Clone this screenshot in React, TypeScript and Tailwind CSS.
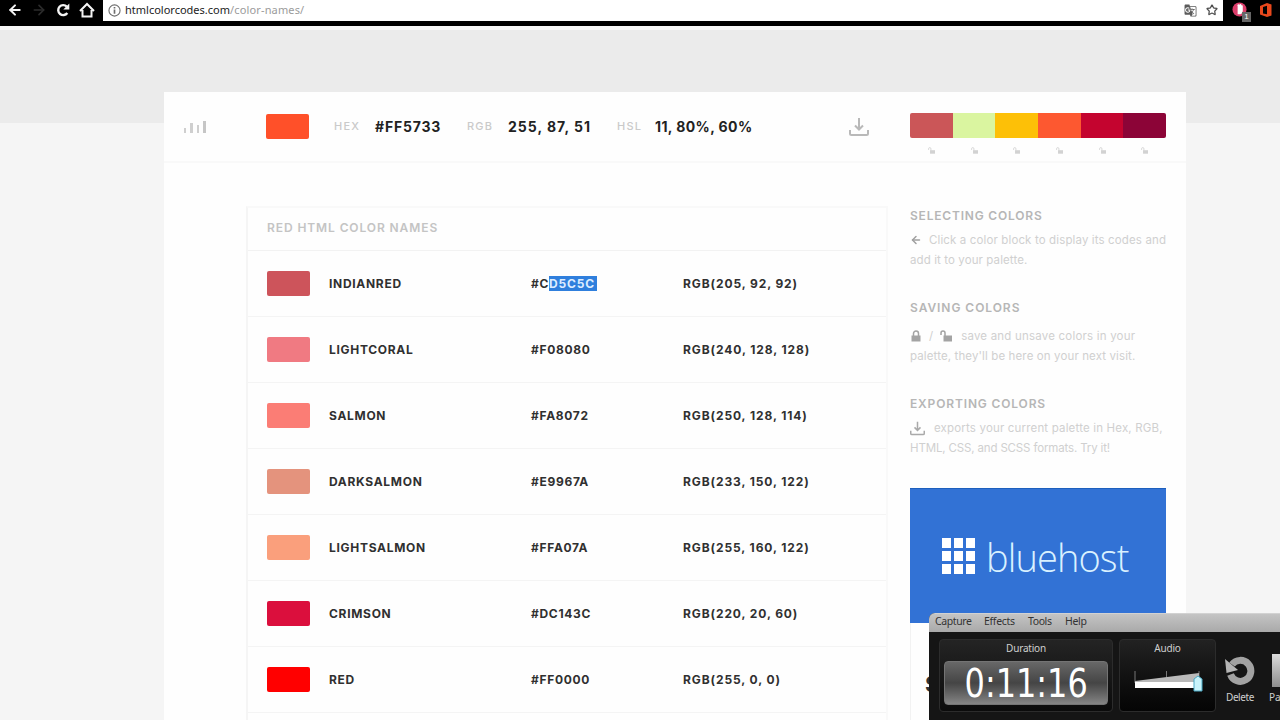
import { ArrowLeft, ArrowRight, Star } from 'lucide-react';
import { MdGTranslate } from 'react-icons/md';

const colors = [
  { name: 'INDIANRED', hex: '#CD5C5C', rgb: 'RGB(205, 92, 92)', swatch: 'bg-[#cd545b]', selected: true },
  { name: 'LIGHTCORAL', hex: '#F08080', rgb: 'RGB(240, 128, 128)', swatch: 'bg-[#f07a82]' },
  { name: 'SALMON', hex: '#FA8072', rgb: 'RGB(250, 128, 114)', swatch: 'bg-[#fb7d75]' },
  { name: 'DARKSALMON', hex: '#E9967A', rgb: 'RGB(233, 150, 122)', swatch: 'bg-[#e4937d]' },
  { name: 'LIGHTSALMON', hex: '#FFA07A', rgb: 'RGB(255, 160, 122)', swatch: 'bg-[#fa9f7c]' },
  { name: 'CRIMSON', hex: '#DC143C', rgb: 'RGB(220, 20, 60)', swatch: 'bg-[#db0f3d]' },
  { name: 'RED', hex: '#FF0000', rgb: 'RGB(255, 0, 0)', swatch: 'bg-[#ff0000]' },
];

const palette = ['bg-[#cb5658]', 'bg-[#daf5a0]', 'bg-[#fdc007]', 'bg-[#fd5830]', 'bg-[#c4042f]', 'bg-[#8c0437]'];

function LockIcon({ open = false, className = '' }: { open?: boolean; className?: string }) {
  return (
    <svg viewBox="0 0 12 12" className={className} fill="none">
      <path d={open ? 'M1 5V3a2 2 0 0 1 4 0v3' : 'M3.5 6V3.5a2.5 2.5 0 0 1 5 0V6'} stroke="currentColor" strokeWidth="1.5" />
      <rect x={open ? 3.5 : 1.5} y="5.5" width={open ? 8.5 : 9} height="6" fill="currentColor" />
    </svg>
  );
}

function DownloadIcon({ className = '' }: { className?: string }) {
  return (
    <svg viewBox="0 0 20 20" className={className} fill="none" stroke="currentColor" strokeWidth="2">
      <path d="M1 13v3.500q0 1.500 1.500 1.500h15q1.500 0 1.500-1.500V13" />
      <path d="M10 1v11M6 8.5l4 4 4-4" />
    </svg>
  );
}

function BrowserBar() {
  return (
    <div className="flex h-[26px] shrink-0 bg-black">
      <div className="flex h-5 w-[103px] shrink-0 items-center text-[#f4f4f4]">
        <ArrowLeft className="ml-[7px] size-4" strokeWidth={3} />
        <ArrowRight className="ml-2 size-4 text-[#2c2c2c]" strokeWidth={2.5} />
        <svg viewBox="0 0 14 14" className="ml-[9px] size-3.5" fill="none">
          <path d="M11.3 10A5 5 0 1 1 10.8 3.6" stroke="currentColor" strokeWidth="2.4" />
          <path d="M13.3 0.5v6h-6z" fill="currentColor" />
        </svg>
        <svg viewBox="0 0 16 16" className="ml-[9px] size-4" fill="none" stroke="currentColor" strokeWidth="2">
          <path d="M1 9l7-7 7 7M3.5 8v6.5h9V8" />
        </svg>
      </div>
      <div className="flex h-[21px] w-[1120px] items-center bg-white">
        <svg viewBox="0 0 14 14" className="mb-px ml-[5px] size-[13px] text-[#6d6d6d]" fill="none" stroke="currentColor">
          <circle cx="7" cy="7" r="6" strokeWidth="1.2" />
          <path d="M7 6v4.5M7 3.2v1.7" strokeWidth="1.8" />
        </svg>
        <span className="ml-1 font-['Noto_Sans',sans-serif] text-[11px] whitespace-nowrap text-[#222]">
          htmlcolorcodes.com<span className="tracking-[0.15px] text-[#9b9b9b]">/color-names/</span>
        </span>
        <MdGTranslate className="mb-px ml-auto size-[13px] text-[#5b5b5b]" />
        <Star className="mr-[5px] mb-0.5 ml-[9px] size-3 text-[#4e4e4e]" strokeWidth={2.5} />
      </div>
      <div className="relative ml-[9px] h-5 w-4">
        <svg viewBox="0 0 16 16" className="mt-[2px] size-[15px]">
          <circle cx="8" cy="8" r="7.5" fill="#dc3e6b" />
          <path d="M6 13V4.5a1 1 0 0 1 2-1.500a1 1 0 0 1 2 .5a1 1 0 0 1 1.500 1V9c0 2-1 3.500-2.500 4z" fill="#fff" />
        </svg>
        <span className="absolute top-3 left-2.5 flex h-2.5 w-[9px] items-center justify-center bg-[#666] font-['Liberation_Sans',sans-serif] text-[8px] text-white">1</span>
      </div>
      <svg viewBox="0 0 12 14" className="mt-[3px] ml-3 h-3.5 w-3" fill="#e8481c">
        <path fillRule="evenodd" d="M0 3l7-3 4.500 1.500v11L7 14 0 11.500zM3 4v6.500l4 .8V2.800z" />
      </svg>
    </div>
  );
}

function ColorBar() {
  return (
    <div className="flex h-[71px] border-b-2 border-[#f9f9f9]">
      <div className="mt-[29px] ml-5 flex h-[13px] w-[82px] items-end gap-1 pb-px">
        <i className="h-[5px] w-0.5 bg-[#cfcfcf]" />
        <i className="h-2.5 w-[3px] bg-[#cfcfcf]" />
        <i className="h-2 w-0.5 bg-[#cfcfcf]" />
        <i className="h-3 w-[3px] bg-[#c6c6c6]" />
      </div>
      <div className="mt-[22px] h-[25px] w-[43px] rounded-[2px] bg-[#ff5029]" />
      <div className="flex h-[69px] items-center text-[14px] font-bold whitespace-nowrap text-[#222]">
        <span className="ml-[25px] w-[41px] text-[11px] font-medium tracking-[1.2px] text-[#cacaca]">HEX</span>
        <span className="w-[92px] tracking-[0.8px]">#FF5733</span>
        <span className="w-[41px] text-[11px] font-medium tracking-[1.2px] text-[#cacaca]">RGB</span>
        <span className="w-[109px] tracking-[1px]">255, 87, 51</span>
        <span className="w-[38px] text-[11px] font-medium tracking-[1.2px] text-[#cacaca]">HSL</span>
        <span className="w-[194px] tracking-[0.4px]">11, 80%, 60%</span>
        <DownloadIcon className="size-5 text-[#b9b9b9]" />
      </div>
      <div className="mt-[21px] ml-auto w-[276px] pr-5">
        <div className="flex h-[25px] overflow-hidden rounded-[2px]">
          {palette.map((bg) => (
            <div key={bg} className={`flex-1 ${bg}`} />
          ))}
        </div>
        <div className="mt-[9px] flex">
          {palette.map((bg) => (
            <div key={bg} className="flex flex-1 justify-center">
              <LockIcon open className="size-[7px] text-[#d2d2d2]" />
            </div>
          ))}
        </div>
      </div>
    </div>
  );
}

function ColorTable() {
  return (
    <div className="mt-[43px] ml-[82px] w-[642px] shrink-0 self-stretch border-2 border-[#f9f9f9] border-l-[#f5f5f5]">
      <div className="flex h-[43px] items-center border-b border-[#f2f2f2] pb-0.5 pl-[19px] text-[12px] font-semibold tracking-[0.9px] text-[#c4c4c4]">
        RED HTML COLOR NAMES
      </div>
      {colors.map((c) => (
        <div key={c.name} className="flex h-[66px] items-center border-b border-[#f4f4f4] pl-[19px] text-[12px] font-bold whitespace-nowrap text-[#303030]">
          <div className={`h-[25px] w-[43px] rounded-[2px] ${c.swatch}`} />
          <div className="ml-[19px] w-[202px] tracking-[0.7px]">{c.name}</div>
          <div className="w-[152px] tracking-[0.7px]">
            {c.selected ? (
              <>
                {c.hex.slice(0, 2)}
                <span className="bg-[#2f7fdd] pr-0.5 tracking-[0.8px] text-[#dcecff]">{c.hex.slice(2)}</span>
              </>
            ) : (
              c.hex
            )}
          </div>
          <div className="tracking-[0.9px]">{c.rgb}</div>
        </div>
      ))}
    </div>
  );
}

function Sidebar() {
  return (
    <div className="ml-[22px] w-[256px] shrink-0 pt-[43px] text-[11.5px] leading-5 whitespace-nowrap text-[#d0d0d0]">
      <h3 className="text-[12px] font-semibold tracking-[0.8px] text-[#b6b6b6]">SELECTING COLORS</h3>
      <p className="mt-1">
        <span className="flex items-center">
          <ArrowLeft className="mr-[7px] size-3 shrink-0 text-[#a0a0a0]" strokeWidth={3} />
          <span className="tracking-[0.13px]">Click a color block to display its codes and</span>
        </span>
        <span className="tracking-[0.1px]">add it to your palette.</span>
      </p>
      <h3 className="mt-7 text-[12px] font-semibold tracking-[0.95px] text-[#b6b6b6]">SAVING COLORS</h3>
      <p className="mt-2">
        <span className="flex items-center">
          <LockIcon className="size-3 text-[#a3a3a3]" />
          <span className="mx-[7px]">/</span>
          <LockIcon open className="mr-[9px] size-3 text-[#a3a3a3]" />
          <span className="tracking-[0.2px]">save and unsave colors in your</span>
        </span>
        <span className="tracking-[0.12px]">palette, they'll be here on your next visit.</span>
      </p>
      <h3 className="mt-7 text-[12px] font-semibold tracking-[0.85px] text-[#b6b6b6]">EXPORTING COLORS</h3>
      <p className="mt-1">
        <span className="flex items-center">
          <DownloadIcon className="mr-[9px] size-[15px] text-[#a9a9a9]" />
          <span className="tracking-[0.17px]">exports your current palette in Hex, RGB,</span>
        </span>
        <span className="tracking-[-0.15px]">HTML, CSS, and SCSS formats. Try it!</span>
      </p>
      <div className="mt-[30px] border border-t-0 border-[#f2f2f2]">
        <div className="-mx-px flex h-[135px] border-t border-[#1d5fbd] bg-[#3272d5] pt-[49px] pl-8">
          <div className="grid h-9 w-[33px] grid-cols-3 gap-[3px]">
            {Array.from({ length: 9 }, (_, i) => (
              <i key={i} className="bg-white" />
            ))}
          </div>
          <span className="ml-[11px] font-['Open_Sans',sans-serif] text-[38px] leading-[38px] font-light tracking-[-0.9px] text-[#d9f1ff]">bluehost</span>
        </div>
        <div className="h-[100px] pt-[45px] pl-3.5 text-[22px] leading-8 font-bold text-[#333]">S</div>
      </div>
    </div>
  );
}

function Recorder() {
  return (
    <div className="absolute top-[613px] left-[929px] h-[107px] w-[351px] overflow-hidden rounded-tl-md bg-[#151515] font-['Noto_Sans',sans-serif]">
      <div className="flex h-[19px] items-center border-t border-[#d2d2d2] bg-linear-to-b from-[#c4c4c4] to-[#a9a9a9] pb-0.5 text-[10.5px] text-[#333]">
        <span className="ml-1.5 w-[49px] tracking-[-0.4px]">Capture</span>
        <span className="w-11 tracking-[-0.3px]">Effects</span>
        <span className="w-[37px] tracking-[-0.4px]">Tools</span>
        <span className="tracking-[-0.3px]">Help</span>
      </div>
      <div className="flex w-[400px] pt-[7px] text-[10px] text-[#cfcfcf]">
        <div className="ml-2.5 h-[73px] w-[174px] rounded border border-[#2c2c2c] bg-linear-to-b from-[#242424] to-[#0b0b0b]">
          <div className="h-[21px] text-center leading-[17px] tracking-[-0.2px]">Duration</div>
          <div className="mx-1 flex h-11 items-center justify-center rounded border border-[#747474] bg-linear-to-b from-[#686868] via-[#454545] to-[#858585] pt-0.5 font-['DejaVu_Sans',sans-serif] text-[39px] text-white">
            <span className="scale-x-[0.82]">0:11:16</span>
          </div>
        </div>
        <div className="ml-1.5 h-[73px] w-[97px] rounded border border-[#2c2c2c] bg-linear-to-b from-[#222] to-[#050505]">
          <div className="h-[19px] text-center leading-[17px] tracking-[-0.2px]">Audio</div>
          <svg viewBox="0 0 97 46" className="h-[46px] w-[97px]">
            <path d="M15 12v12M46.500 12v12M79 12v8" stroke="#777" />
            <path d="M15 22l64-8v10H15z" fill="#b9b9b9" />
            <path d="M15 23h60v6H15z" fill="#fff" />
            <path d="M74 20l4-3 4 3v12h-8z" fill="#c8f3fa" stroke="#4aa9c5" />
          </svg>
        </div>
        <div className="flex w-12 flex-col items-center pt-[15px]">
          <svg viewBox="0 0 32 32" className="h-8 w-8">
            <path d="M8 10.500a10.500 10.500 0 1 1-1.500 10" fill="none" stroke="#a2a2a2" strokeWidth="7" />
            <path d="M1 5l1.500 14L14 16z" fill="#b5b5b5" />
          </svg>
          <span className="mt-[5px] leading-3 tracking-[-0.4px]">Delete</span>
        </div>
        <div className="ml-[5px] pt-[15px]">
          <div className="ml-[3px] flex gap-1">
            <i className="h-[33px] w-2.5 bg-linear-to-b from-[#dcdcdc] to-[#8e8e8e]" />
            <i className="h-[33px] w-2.5 bg-linear-to-b from-[#dcdcdc] to-[#8e8e8e]" />
          </div>
          <span className="block pt-1 leading-3">Pause</span>
        </div>
      </div>
    </div>
  );
}

export default function App() {
  return (
    <div className="relative flex h-[720px] w-[1280px] flex-col overflow-hidden font-['Inter',sans-serif]">
      <BrowserBar />
      <main className="h-[694px] overflow-hidden border-t-4 border-[#f8f8f8] bg-[linear-gradient(#ebebeb_93px,#f5f5f5_93px)] pt-[62px]">
        <div className="ml-[164px] h-[700px] w-[1022px] bg-[#fefefe]">
          <ColorBar />
          <div className="flex">
            <ColorTable />
            <Sidebar />
          </div>
        </div>
      </main>
      <Recorder />
    </div>
  );
}
